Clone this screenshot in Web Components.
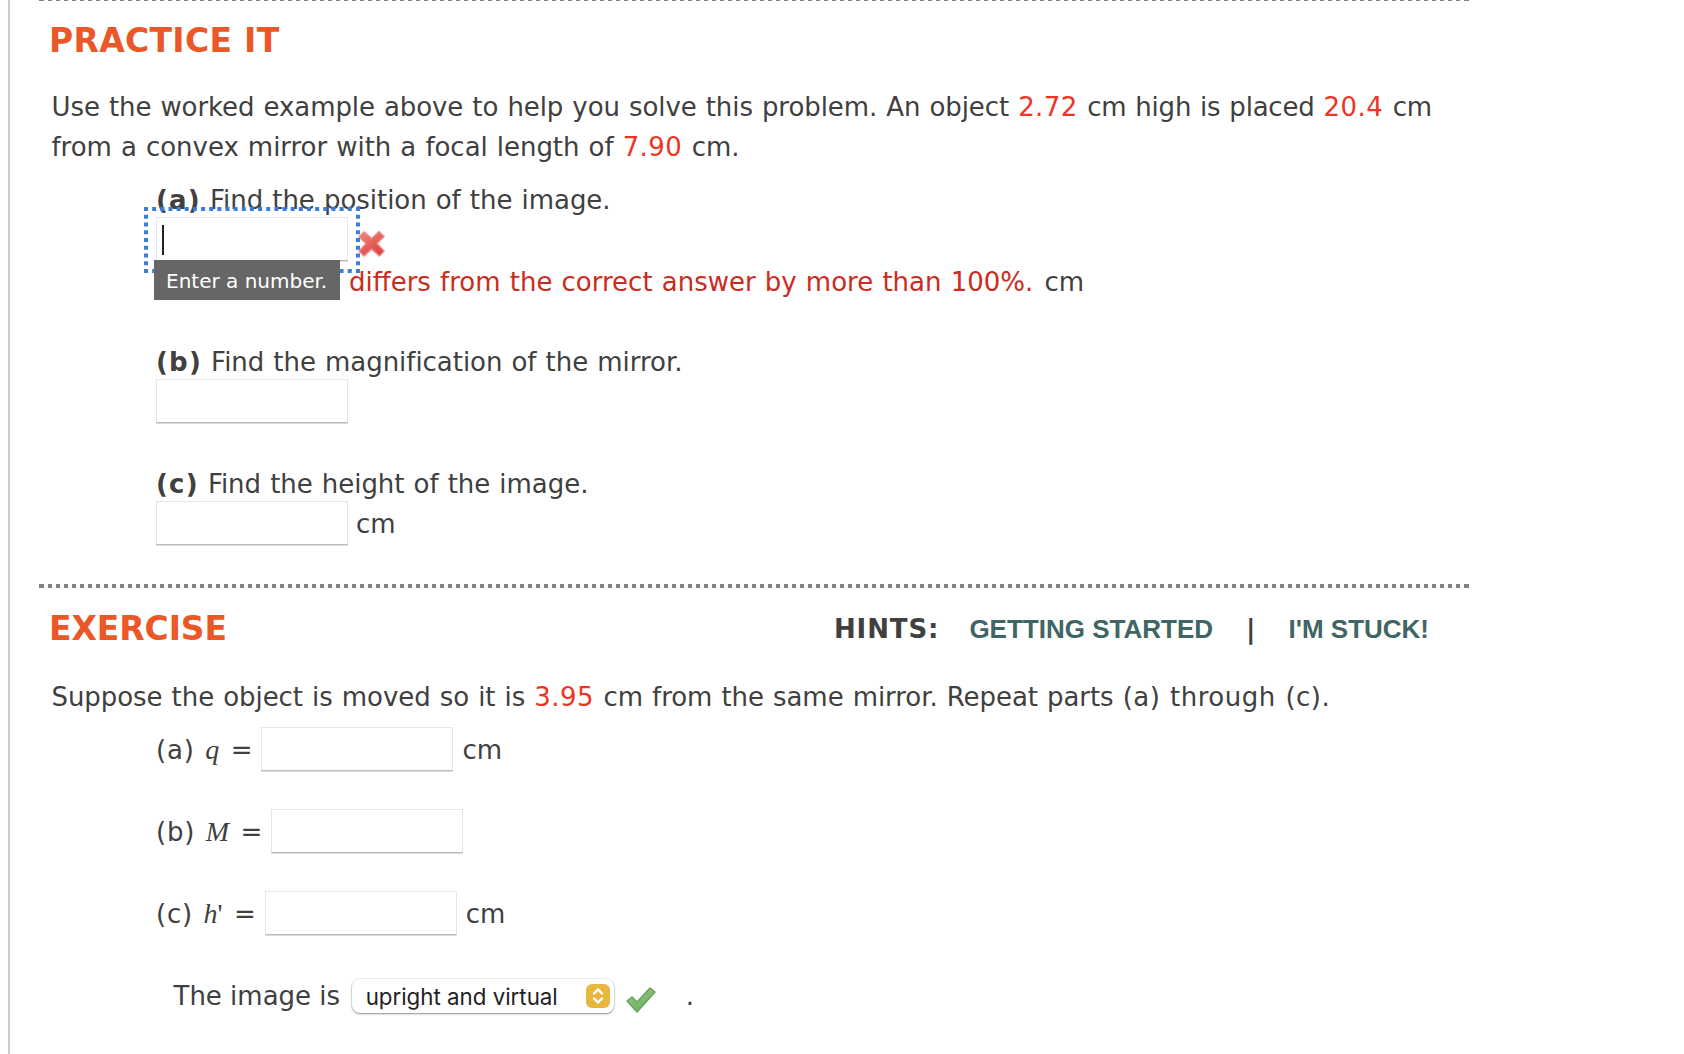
<!DOCTYPE html>
<html lang="en">
<head>
<meta charset="utf-8">
<title>Practice It</title>
<style>
  body {
    margin: 0;
    background: #fff;
    color: #404040;
    font: 26px/40px Verdana, "DejaVu Sans", sans-serif;
    overflow: hidden;
  }

  text-run b { letter-spacing: 1.2px; }
  text-run .wide { letter-spacing: .5px; }
  text-run .tight { letter-spacing: -.22px; }
  text-run .even { letter-spacing: -.04px; }
</style>
</head>
<body>
<problem-page>
  <dotted-rule thin></dotted-rule>
  <problem-section>
    <section-title slot="title" style="letter-spacing: .3px">PRACTICE IT</section-title>
    <text-run style="--track: -.08px">Use the worked example above to help you solve this problem. An object <given-value>2.72</given-value> <span class="tight">cm high is placed</span> <given-value>20.4</given-value> <span class="tight">cm</span><br><span class="even">from a convex mirror with a focal length of</span> <given-value>7.90</given-value> cm.</text-run>
    <question-part slot="parts">
      <text-run slot="prompt"><b>(a)</b> Find the position of the image.</text-run>
      <answer-box active hint="Enter a number."></answer-box>
      <mark-icon kind="wrong"></mark-icon>
      <text-run slot="feedback" style="--track: 0"><feedback-text>differs from the correct answer by more than 100%.</feedback-text> cm</text-run>
    </question-part>
    <question-part slot="parts">
      <text-run slot="prompt"><b>(b)</b> Find the magnification of the mirror.</text-run>
      <answer-box></answer-box>
    </question-part>
    <question-part slot="parts">
      <text-run slot="prompt"><b>(c)</b> Find the height of the image.</text-run>
      <answer-box></answer-box>
      <text-run class="unit">cm</text-run>
    </question-part>
  </problem-section>
  <dotted-rule></dotted-rule>
  <problem-section class="exercise">
    <section-title slot="title" style="letter-spacing: -.1px">EXERCISE</section-title>
    <hint-links slot="title">
      <a slot="first">GETTING STARTED</a>
      <a slot="second">I'M STUCK!</a>
    </hint-links>
    <text-run style="--track: -.06px">Suppose the object is moved so it is <given-value>3.95</given-value> cm from the same mirror. Repeat parts <span class="wide">(a) through (c).</span></text-run>
    <equation-row slot="parts" symbol="q" label="(a)" unit="cm"></equation-row>
    <equation-row slot="parts" symbol="M" label="(b)"></equation-row>
    <equation-row slot="parts" symbol="h" prime="'" label="(c)" unit="cm"></equation-row>
    <choice-row slot="parts" value="upright and virtual">The image is</choice-row>
  </problem-section>
</problem-page>

<script>
function define(name, html, setup) {
  const template = document.createElement('template');
  template.innerHTML = html;

  customElements.define(name, class extends HTMLElement {
    constructor() {
      super();
      this.attachShadow({ mode: 'open' }).append(template.content.cloneNode(true));
    }

    connectedCallback() {
      if (setup) setup(this, this.shadowRoot);
    }
  });
}

define('problem-page', `
  <style>
    :host {
      display: block;
      box-sizing: border-box;
      height: 1054px;
      margin-left: 8px;
      padding-left: 29px;
      border-left: 2px solid #ccc;
    }
    main { width: 1430px; }
  </style>
  <main><slot></slot></main>
`);

define('dotted-rule', `
  <style>
    :host {
      display: block;
      height: 4px;
      border: solid #808080;
      border-width: 0 1px;
      background: repeating-linear-gradient(to right, #808080 0 4px, transparent 4px 8px) padding-box;
    }
    :host([thin]) { height: 1px; }
  </style>
`);

define('problem-section', `
  <style>
    :host { display: block; padding: 20px 0 38px; }
    header {
      display: flex;
      justify-content: space-between;
      padding: 0 40px 0 10px;
      margin-bottom: 26px;
    }
    .text { padding-left: 12.5px; margin-bottom: 13px; }
    .parts { display: flex; flex-direction: column; gap: 40px; padding-left: 117px; }
    :host(.exercise) { padding: 21px 0 0; }
    :host(.exercise) header { margin-bottom: 28px; }
    :host(.exercise) .text { margin-bottom: 10px; }
    :host(.exercise) .parts { gap: 37px; }
  </style>
  <header><slot name="title"></slot></header>
  <div class="text"><slot></slot></div>
  <div class="parts"><slot name="parts"></slot></div>
`);

define('section-title', `
  <style>
    :host {
      display: block;
      font-size: 33px;
      font-weight: bold;
      color: #ec5728;
      white-space: nowrap;
    }
  </style>
  <slot></slot>
`);

define('text-run', `
  <style>
    :host {
      display: block;
      white-space: nowrap;
      letter-spacing: var(--track, -.04px);
      word-spacing: .9px;
    }
  </style>
  <slot></slot>
`);

define('given-value', `
  <style>:host { color: #ee3524; letter-spacing: .4px; }</style>
  <slot></slot>
`);

define('feedback-text', `
  <style>:host { color: #cc2b1d; margin-right: 2px; }</style>
  <slot></slot>
`);

define('question-part', `
  <style>
    :host { display: block; }
    .prompt { height: 37px; }
    .answer { display: flex; height: 45px; }
    /* leaves room for the hint that hangs below the answer */
    .feedback { padding-left: 193px; }
    ::slotted(.unit) { padding: 3px 0 0 8px; }
  </style>
  <div class="prompt"><slot name="prompt"></slot></div>
  <div class="answer"><slot></slot></div>
  <div class="feedback"><slot name="feedback"></slot></div>
`);

define('answer-box', `
  <style>
    :host { display: block; position: relative; width: 192px; height: 45px; }
    .field {
      box-sizing: border-box;
      height: 44px;
      padding: 7px 5px;
      border: 1px solid #e6e6e6;
      border-bottom-color: #bdbdbd;
      box-shadow: 0 1px 0 #dcdcdc;
    }
    .caret, .ring, .hint { display: none; }
    :host([active]) .caret { display: block; width: 2px; height: 30px; background: #222; }
    :host([active]) .ring {
      display: block;
      position: absolute;
      left: -12px;
      top: -10px;
    }
    :host([active]) .hint {
      display: block;
      position: absolute;
      left: -2px;
      top: 43px;
      box-sizing: border-box;
      width: 186px;
      height: 40px;
      padding: 1px 0 0 12px;
      background: #666;
      color: #fff;
      font-size: 20px;
      white-space: nowrap;
    }
  </style>
  <div class="field"><div class="caret"></div></div>
  <svg class="ring" width="216" height="66" fill="none" stroke="#3b7ddd" stroke-width="4">
    <path d="M0 2H216M0 64H216" stroke-dasharray="4 4.15"/>
    <path d="M2 0V66M214 0V66" stroke-dasharray="4 3.75"/>
  </svg>
  <div class="hint"></div>
`, (host, root) => {
  root.querySelector('.hint').textContent = host.getAttribute('hint');
});

define('mark-icon', `
  <style>
    :host { display: block; }
    svg { display: none; }
    :host([kind=wrong]) .wrong, :host([kind=right]) .right { display: block; }
    .wrong { margin: 13px 0 0 10px; }
    .right { margin: 10px 0 0 11px; }
  </style>
  <svg class="wrong" width="28" height="28" viewBox="0 0 30 30">
    <defs>
      <linearGradient id="red" x1="0" y1="0" x2=".6" y2="1">
        <stop offset="0" stop-color="#f08a84"/>
        <stop offset="1" stop-color="#dd4440"/>
      </linearGradient>
    </defs>
    <path d="M6.500 2L14.500 9 22.500 1.500 28 7 20.500 14.500 28 22.500 23 28 14.500 20.500 6.500 28 1 22.500 8.500 14.500 1 7.500Z" fill="url(#red)" stroke="#ef8f8a" stroke-width="1.500" stroke-linejoin="round"/>
  </svg>
  <svg class="right" width="32" height="28">
    <defs>
      <linearGradient id="green" x1="0" y1="0" x2=".6" y2="1">
        <stop offset="0" stop-color="#93c981"/>
        <stop offset="1" stop-color="#70b060"/>
      </linearGradient>
    </defs>
    <path d="M2 15L7 11 12 16 25 2 30 6 12 26Z" fill="url(#green)" stroke="#6ba35c" stroke-width="1.500" stroke-linejoin="round"/>
  </svg>
`);

define('hint-links', `
  <style>
    :host { display: flex; font-weight: bold; white-space: nowrap; }
    .label { margin-right: 30px; letter-spacing: .9px; }
    .bar { margin: 0 33px; }
    ::slotted(a) { color: #3f6564; font-family: Arial, "Liberation Sans", sans-serif; }
  </style>
  <span class="label">HINTS:</span>
  <slot name="first"></slot>
  <span class="bar">|</span>
  <slot name="second"></slot>
`);

define('equation-row', `
  <style>
    :host { display: flex; height: 45px; }
    span { padding-top: 3px; }
    .label { letter-spacing: .8px; }
    .math {
      display: flex;
      margin: 0 11.5px 0 10.5px;
      font-family: "Times New Roman", "Liberation Serif", serif;
      font-size: 28px;
    }
    .symbol { font-style: italic; }
    .unit { margin-left: 9px; }
    answer-box { margin-left: 9px; }
  </style>
  <span class="label"></span>
  <div class="math"><span class="symbol"></span><span class="prime"></span></div>
  <span>=</span>
  <answer-box></answer-box>
  <span class="unit"></span>
`, (host, root) => {
  for (const name of ['label', 'symbol', 'prime', 'unit']) {
    root.querySelector('.' + name).textContent = host.getAttribute(name);
  }
});

define('choice-row', `
  <style>
    :host { display: flex; padding-left: 17.5px; white-space: nowrap; margin-top: 3px; }
    .select {
      box-sizing: border-box;
      display: flex;
      align-items: center;
      justify-content: space-between;
      width: 262px;
      height: 34px;
      margin: 3px 0 0 11.5px;
      padding: 0 4px 0 14px;
      border-radius: 8px;
      box-shadow: 0 0 1px 1px #0001, 0 1px 2px #0006;
      color: #222;
      font: 22.3px/32px Inter, sans-serif;
    }
    .value { padding-top: 1px; }
    .end { margin-left: 29px; }
  </style>
  <slot></slot>
  <div class="select">
    <span class="value"></span>
    <svg width="24" height="24">
      <rect width="24" height="24" rx="6" fill="#e7b740"/>
      <path d="M8 9.500L12 5.500 16 9.500M8 14.500L12 18.500 16 14.500" fill="none" stroke="#fff" stroke-width="2.400" stroke-linecap="round" stroke-linejoin="round"/>
    </svg>
  </div>
  <mark-icon kind="right"></mark-icon>
  <span class="end">.</span>
`, (host, root) => {
  root.querySelector('.value').textContent = host.getAttribute('value');
});
</script>
</body>
</html>
